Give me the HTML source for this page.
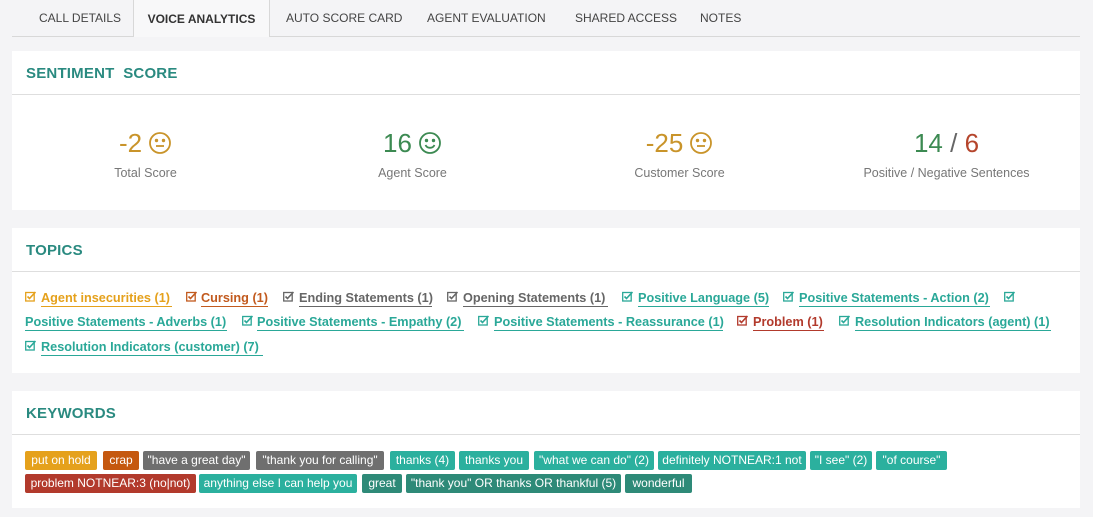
<!DOCTYPE html>
<html><head><meta charset="utf-8"><style>
*{margin:0;padding:0;box-sizing:border-box}
body{width:1093px;height:517px;background:#f4f4f6;font-family:"Liberation Sans",sans-serif;position:relative;overflow:hidden;color:#555}
.tabs{position:absolute;left:12px;top:0;width:1068px;height:37px;border-bottom:1px solid #d8d8d8}
.tab{position:absolute;top:11px;font-size:12px;color:#444}
.tab.act{top:-1px;height:38px;background:#f8f8f9;border:1px solid #d8d8d8;border-bottom:none;padding-top:12px;font-weight:bold;color:#333;text-align:center}
.card{position:absolute;left:12px;width:1068px;background:#fff}
.hd{position:absolute;left:14px;font-size:15px;font-weight:bold;color:#2a8a80;letter-spacing:.2px}
.hl{position:absolute;left:0;right:0;height:1px;background:#dedede}
.col{position:absolute;width:267px;text-align:center}
.num{font-size:26px;top:77px;height:30px}
.lbl{font-size:12.5px;color:#777;top:115px}
.face{display:inline-block;vertical-align:-3px;margin-left:6px}
.t{position:absolute;font-size:12.7px;font-weight:bold;white-space:nowrap;height:16px;line-height:14px;border-bottom:1.5px solid}
.cb{position:absolute;width:11px;height:11px}
.o{color:#e5a11c;border-color:#e5a11c}.c{color:#c25a1e;border-color:#c25a1e}.g{color:#666;border-color:#666}.tl{color:#2aa898;border-color:#2aa898}.r{color:#b23a2c;border-color:#b23a2c}
.tag{position:absolute;height:19px;color:#fff;font-size:12px;line-height:19px;text-align:center;border-radius:2px;white-space:nowrap;overflow:hidden}
</style></head><body>
<div class="tabs">
<div class="tab" style="left:27px">CALL DETAILS</div>
<div class="tab act" style="left:121px;width:137px">VOICE ANALYTICS</div>
<div class="tab" style="left:274px">AUTO SCORE CARD</div>
<div class="tab" style="left:415px">AGENT EVALUATION</div>
<div class="tab" style="left:563px">SHARED ACCESS</div>
<div class="tab" style="left:688px">NOTES</div>
</div>

<div class="card" style="top:51px;height:159px">
<div class="hd" style="top:14px">SENTIMENT&nbsp; SCORE</div>
<div class="hl" style="top:43px"></div>
<div class="col num" style="left:0;color:#c9942a">-2<svg class="face" width="24" height="24" viewBox="0 0 24 24" fill="none" stroke="#c9942a" stroke-width="1.8"><circle cx="12" cy="12" r="10"/><circle cx="8.5" cy="9.5" r=".8" fill="#c9942a"/><circle cx="15.5" cy="9.5" r=".8" fill="#c9942a"/><path d="M8 15h8"/></svg></div>
<div class="col lbl" style="left:0">Total Score</div>
<div class="col num" style="left:267px;color:#3c8a52">16<svg class="face" width="24" height="24" viewBox="0 0 24 24" fill="none" stroke="#3c8a52" stroke-width="1.8"><circle cx="12" cy="12" r="10"/><circle cx="8.5" cy="9.5" r=".8" fill="#3c8a52"/><circle cx="15.5" cy="9.5" r=".8" fill="#3c8a52"/><path d="M7.5 14a5 5 0 0 0 9 0"/></svg></div>
<div class="col lbl" style="left:267px">Agent Score</div>
<div class="col num" style="left:534px;color:#c9942a">-25<svg class="face" width="24" height="24" viewBox="0 0 24 24" fill="none" stroke="#c9942a" stroke-width="1.8"><circle cx="12" cy="12" r="10"/><circle cx="8.5" cy="9.5" r=".8" fill="#c9942a"/><circle cx="15.5" cy="9.5" r=".8" fill="#c9942a"/><path d="M8 15h8"/></svg></div>
<div class="col lbl" style="left:534px">Customer Score</div>
<div class="col num" style="left:801px"><span style="color:#3c8a52">14</span> <span style="color:#666">/</span> <span style="color:#b5452c">6</span></div>
<div class="col lbl" style="left:801px">Positive / Negative Sentences</div>
</div>

<div class="card" style="top:228px;height:145px">
<div class="hd" style="top:14px">TOPICS</div>
<div class="hl" style="top:43px"></div>
</div>
<svg width="0" height="0" style="position:absolute"><defs><symbol id="ck" viewBox="0 0 11 11"><rect x=".7" y="1.5" width="8.5" height="8.5" fill="none" stroke="currentColor" stroke-width="1.3"/><path d="M2.5 5.5l2 2L10.5 1" fill="none" stroke="currentColor" stroke-width="1.6"/></symbol></defs></svg>

<div class="card" style="top:391px;height:117px">
<div class="hd" style="top:14px">KEYWORDS</div>
<div class="hl" style="top:43px"></div>
</div>

<svg class="cb o" style="left:25px;top:291px"><use href="#ck"/></svg><span class="t o" style="left:41px;top:291px;width:131px">Agent insecurities (1)</span>
<svg class="cb c" style="left:186px;top:291px"><use href="#ck"/></svg><span class="t c" style="left:201px;top:291px;width:67px">Cursing (1)</span>
<svg class="cb g" style="left:283px;top:291px"><use href="#ck"/></svg><span class="t g" style="left:299px;top:291px;width:133px">Ending Statements (1)</span>
<svg class="cb g" style="left:447px;top:291px"><use href="#ck"/></svg><span class="t g" style="left:463px;top:291px;width:145px">Opening Statements (1)</span>
<svg class="cb tl" style="left:622px;top:291px"><use href="#ck"/></svg><span class="t tl" style="left:638px;top:291px;width:131px">Positive Language (5)</span>
<svg class="cb tl" style="left:783px;top:291px"><use href="#ck"/></svg><span class="t tl" style="left:799px;top:291px;width:191px">Positive Statements - Action (2)</span>
<svg class="cb tl" style="left:1004px;top:291px"><use href="#ck"/></svg>
<span class="t tl" style="left:25px;top:315px;width:202px">Positive Statements - Adverbs (1)</span>
<svg class="cb tl" style="left:242px;top:315px"><use href="#ck"/></svg><span class="t tl" style="left:257px;top:315px;width:207px">Positive Statements - Empathy (2)</span>
<svg class="cb tl" style="left:478px;top:315px"><use href="#ck"/></svg><span class="t tl" style="left:494px;top:315px;width:229px">Positive Statements - Reassurance (1)</span>
<svg class="cb r" style="left:737px;top:315px"><use href="#ck"/></svg><span class="t r" style="left:753px;top:315px;width:71px">Problem (1)</span>
<svg class="cb tl" style="left:839px;top:315px"><use href="#ck"/></svg><span class="t tl" style="left:855px;top:315px;width:196px">Resolution Indicators (agent) (1)</span>
<svg class="cb tl" style="left:25px;top:340px"><use href="#ck"/></svg><span class="t tl" style="left:41px;top:340px;width:222px">Resolution Indicators (customer) (7)</span>

<div class="tag" style="left:25px;top:451px;width:72px;background:#e5a11c">put on hold</div>
<div class="tag" style="left:103px;top:451px;width:36px;background:#c5580f">crap</div>
<div class="tag" style="left:143px;top:451px;width:107px;background:#6f6f6f">"have a great day"</div>
<div class="tag" style="left:256px;top:451px;width:128px;background:#6f6f6f">"thank you for calling"</div>
<div class="tag" style="left:390px;top:451px;width:65px;background:#2bb09e">thanks (4)</div>
<div class="tag" style="left:459px;top:451px;width:70px;background:#2bb09e">thanks you</div>
<div class="tag" style="left:534px;top:451px;width:120px;background:#2bb09e">"what we can do" (2)</div>
<div class="tag" style="left:658px;top:451px;width:148px;background:#2bb09e">definitely NOTNEAR:1 not</div>
<div class="tag" style="left:810px;top:451px;width:62px;background:#2bb09e">"I see" (2)</div>
<div class="tag" style="left:876px;top:451px;width:71px;background:#2bb09e">"of course"</div>
<div class="tag" style="left:25px;top:474px;width:171px;background:#b23a2c">problem NOTNEAR:3 (no|not)</div>
<div class="tag" style="left:199px;top:474px;width:158px;background:#2bb09e">anything else I can help you</div>
<div class="tag" style="left:362px;top:474px;width:40px;background:#2e8a78">great</div>
<div class="tag" style="left:406px;top:474px;width:215px;background:#2e8a78">"thank you" OR thanks OR thankful (5)</div>
<div class="tag" style="left:625px;top:474px;width:67px;background:#2e8a78">wonderful</div>
</body></html>
